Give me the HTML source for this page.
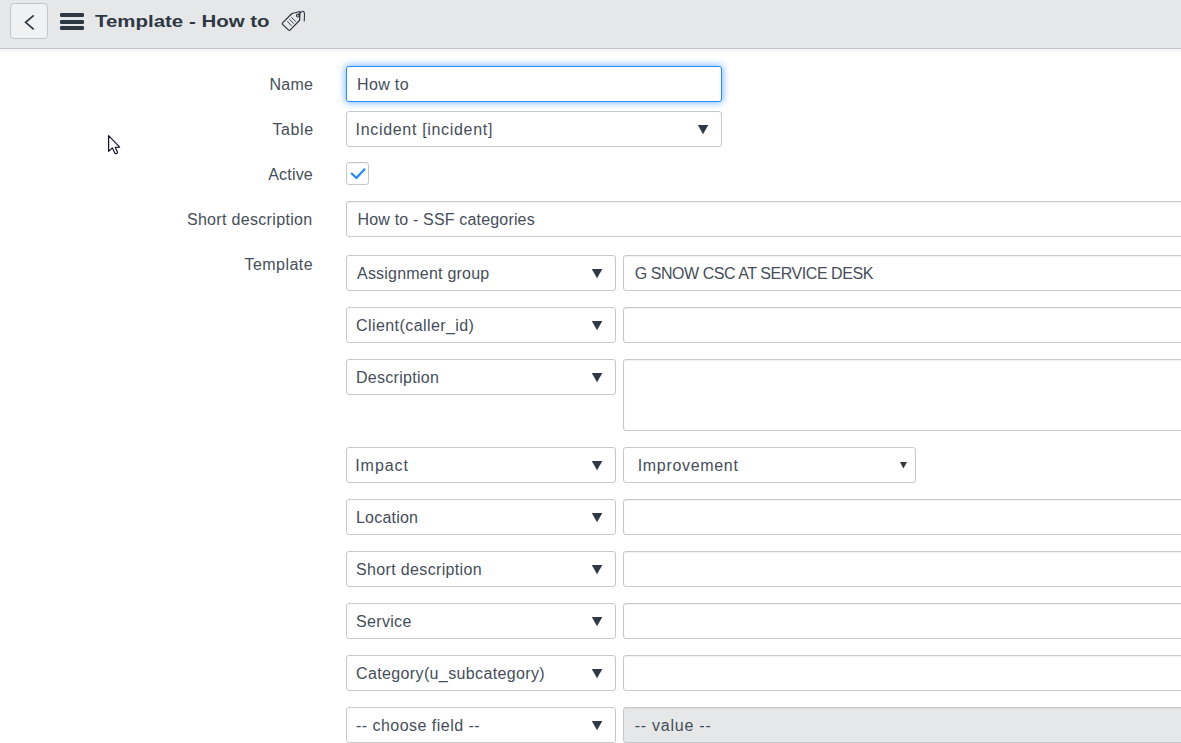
<!DOCTYPE html>
<html><head><meta charset="utf-8">
<style>
*{box-sizing:border-box;margin:0;padding:0}
html,body{width:1181px;height:743px;overflow:hidden;background:#fff;font-family:"Liberation Sans",sans-serif;color:#454e59}
.hdr{position:absolute;left:0;top:0;width:1181px;height:49px;background:#e6e7e9;border-bottom:1px solid #c2c5c9}
.hshadow{position:absolute;left:0;top:49px;width:1181px;height:4px;background:linear-gradient(#f1f2f3,#fff)}
.back{position:absolute;left:10px;top:3px;width:38px;height:36px;border:1px solid #c3c6cb;border-radius:4px;background:#f0f1f3}
.ham{position:absolute;left:60px;width:24px;height:4px;border-radius:1.2px;background:#2e3843}
.title{position:absolute;left:95px;top:10.5px;font-weight:bold;font-size:17px;line-height:22px;color:#2e3843;white-space:nowrap;transform:scaleX(1.2024);transform-origin:0 0}
.box{position:absolute;height:36px;border:1px solid #c6c8cc;border-radius:3px;background:#fff;box-shadow:inset 0 1px 1px rgba(0,0,0,.06)}
.sel{box-shadow:none}
.t{position:absolute;font-size:16px;line-height:20px;white-space:nowrap;transform-origin:0 0}
.tri{position:absolute;top:13px;right:12.8px;width:0;height:0;border-left:5.3px solid transparent;border-right:5.3px solid transparent;border-top:9.6px solid #2f3a45}
</style></head><body>
<div class="hdr"></div>
<div class="hshadow"></div>
<div class="back"><svg width="38" height="36" style="position:absolute;left:-1px;top:-1px"><path d="M23.2 12.9 L15.6 19.3 L23.2 25.9" fill="none" stroke="#2e3843" stroke-width="1.7" stroke-linecap="round"/></svg></div>
<div class="ham" style="top:13px"></div>
<div class="ham" style="top:20px"></div>
<div class="ham" style="top:26px"></div>
<div class="title">Template - How to</div>
<svg style="position:absolute;left:276px;top:6px" width="36" height="30" viewBox="0 0 36 30">
<path d="M24 5.5 L16 7.5 L6.8 16.6 Q5.8 17.6 6.8 18.6 L12.3 23.9 Q13.3 24.9 14.3 23.9 L23.6 14.3 Z" fill="none" stroke="#2e3843" stroke-width="1.25" stroke-linejoin="round"/>
<circle cx="22" cy="9.5" r="1.5" fill="none" stroke="#2e3843" stroke-width="1.1"/>
<path d="M22 9.5 Q24.5 5.8 26.6 5.3 Q28.7 5.1 28.5 9.8 L28.2 15.5" fill="none" stroke="#2e3843" stroke-width="1.1"/>
<path d="M15.3 11.3 L19.8 15.5 M13.3 13.3 L17.8 17.6 M11.3 15.1 L15.5 19.8" stroke="#2e3843" stroke-width="0.9"/>
</svg>
<svg style="position:absolute;left:106px;top:133px" width="16" height="24" viewBox="0 0 16 24">
<path d="M2.6 2.6 L2.6 18.3 L6.4 14.9 L8.9 20.2 Q9.4 20.9 10.2 20.6 L11 20.2 Q11.7 19.8 11.4 19 L9.2 14.3 L13.7 14.1 Z" fill="#fff" stroke="#15152a" stroke-width="1.2" stroke-linejoin="round"/>
</svg>
<div class="box" style="left:346px;top:66px;width:376px;height:36px;border-color:#2b8cf8;box-shadow:0 0 7px 1px rgba(40,140,250,.6)"></div>
<div class="box sel" style="left:346px;top:111px;width:376px;height:36px;"><svg width="376" height="40" style="position:absolute;left:0;top:0;overflow:visible"><polygon points="350.80,13.0 361.30,13.0 356.05,22.3" fill="#2f3a45"/></svg></div>
<div class="box" style="left:346px;top:162px;width:23px;height:23px;"><svg width="21" height="21" style="position:absolute;left:0;top:0"><path d="M4.1 10 L9.5 14.8 L18 5.8" fill="none" stroke="#2b8cf8" stroke-width="2.3"/></svg></div>
<div class="box" style="left:346px;top:201px;width:900px;height:36px;"></div>
<div class="box sel" style="left:346px;top:255px;width:270px;height:36px;"><svg width="270" height="40" style="position:absolute;left:0;top:0;overflow:visible"><polygon points="244.80,13.0 255.30,13.0 250.05,22.3" fill="#2f3a45"/></svg></div>
<div class="box" style="left:623px;top:255px;width:700px;height:36px;"></div>
<div class="box sel" style="left:346px;top:307px;width:270px;height:36px;"><svg width="270" height="40" style="position:absolute;left:0;top:0;overflow:visible"><polygon points="244.80,13.0 255.30,13.0 250.05,22.3" fill="#2f3a45"/></svg></div>
<div class="box" style="left:623px;top:307px;width:700px;height:36px;"></div>
<div class="box sel" style="left:346px;top:359px;width:270px;height:36px;"><svg width="270" height="40" style="position:absolute;left:0;top:0;overflow:visible"><polygon points="244.80,13.0 255.30,13.0 250.05,22.3" fill="#2f3a45"/></svg></div>
<div class="box" style="left:623px;top:359px;width:700px;height:72px;"></div>
<div class="box sel" style="left:346px;top:447px;width:270px;height:36px;"><svg width="270" height="40" style="position:absolute;left:0;top:0;overflow:visible"><polygon points="244.80,13.0 255.30,13.0 250.05,22.3" fill="#2f3a45"/></svg></div>
<div class="box sel" style="left:623px;top:447px;width:293px;height:36px;"><svg width="293" height="40" style="position:absolute;left:0;top:0;overflow:visible"><polygon points="275.90,13.9 283.00,13.9 279.45,20.6" fill="#2f3a45"/></svg></div>
<div class="box sel" style="left:346px;top:499px;width:270px;height:36px;"><svg width="270" height="40" style="position:absolute;left:0;top:0;overflow:visible"><polygon points="244.80,13.0 255.30,13.0 250.05,22.3" fill="#2f3a45"/></svg></div>
<div class="box" style="left:623px;top:499px;width:700px;height:36px;"></div>
<div class="box sel" style="left:346px;top:551px;width:270px;height:36px;"><svg width="270" height="40" style="position:absolute;left:0;top:0;overflow:visible"><polygon points="244.80,13.0 255.30,13.0 250.05,22.3" fill="#2f3a45"/></svg></div>
<div class="box" style="left:623px;top:551px;width:700px;height:36px;"></div>
<div class="box sel" style="left:346px;top:603px;width:270px;height:36px;"><svg width="270" height="40" style="position:absolute;left:0;top:0;overflow:visible"><polygon points="244.80,13.0 255.30,13.0 250.05,22.3" fill="#2f3a45"/></svg></div>
<div class="box" style="left:623px;top:603px;width:700px;height:36px;"></div>
<div class="box sel" style="left:346px;top:655px;width:270px;height:36px;"><svg width="270" height="40" style="position:absolute;left:0;top:0;overflow:visible"><polygon points="244.80,13.0 255.30,13.0 250.05,22.3" fill="#2f3a45"/></svg></div>
<div class="box" style="left:623px;top:655px;width:700px;height:36px;"></div>
<div class="box sel" style="left:346px;top:707px;width:270px;height:36px;"><svg width="270" height="40" style="position:absolute;left:0;top:0;overflow:visible"><polygon points="244.80,13.0 255.30,13.0 250.05,22.3" fill="#2f3a45"/></svg></div>
<div class="box" style="left:623px;top:707px;width:700px;height:36px;background:#e6e7e9"></div>
<div class="t" style="left:269.50px;top:74.50px;letter-spacing:0.267px">Name</div>
<div class="t" style="left:272.40px;top:119.50px;letter-spacing:0.600px">Table</div>
<div class="t" style="left:268.20px;top:164.50px;letter-spacing:0.200px">Active</div>
<div class="t" style="left:186.90px;top:209.50px;letter-spacing:0.325px">Short description</div>
<div class="t" style="left:244.50px;top:254.50px;letter-spacing:0.457px">Template</div>
<div class="t" style="left:357.05px;top:74.50px;letter-spacing:0.340px">How to</div>
<div class="t" style="left:355.60px;top:119.50px;letter-spacing:0.678px">Incident [incident]</div>
<div class="t" style="left:357.50px;top:209.50px;letter-spacing:0.172px">How to - SSF categories</div>
<div class="t" style="left:357.00px;top:263.50px;letter-spacing:0.214px">Assignment group</div>
<div class="t" style="left:634.70px;top:263.50px;letter-spacing:-0.448px">G SNOW CSC AT SERVICE DESK</div>
<div class="t" style="left:356.00px;top:315.50px;letter-spacing:0.425px">Client(caller_id)</div>
<div class="t" style="left:356.00px;top:367.50px;letter-spacing:0.280px">Description</div>
<div class="t" style="left:355.20px;top:455.50px;letter-spacing:0.960px">Impact</div>
<div class="t" style="left:637.70px;top:455.50px;letter-spacing:0.680px">Improvement</div>
<div class="t" style="left:356.00px;top:507.50px;letter-spacing:0.200px">Location</div>
<div class="t" style="left:356.00px;top:559.50px;letter-spacing:0.350px">Short description</div>
<div class="t" style="left:356.00px;top:611.50px;letter-spacing:0.334px">Service</div>
<div class="t" style="left:356.10px;top:663.50px;letter-spacing:0.363px">Category(u_subcategory)</div>
<div class="t" style="left:356.00px;top:715.50px;letter-spacing:0.471px">-- choose field --</div>
<div class="t" style="left:634.70px;top:715.50px;letter-spacing:0.760px">-- value --</div>
</body></html>
